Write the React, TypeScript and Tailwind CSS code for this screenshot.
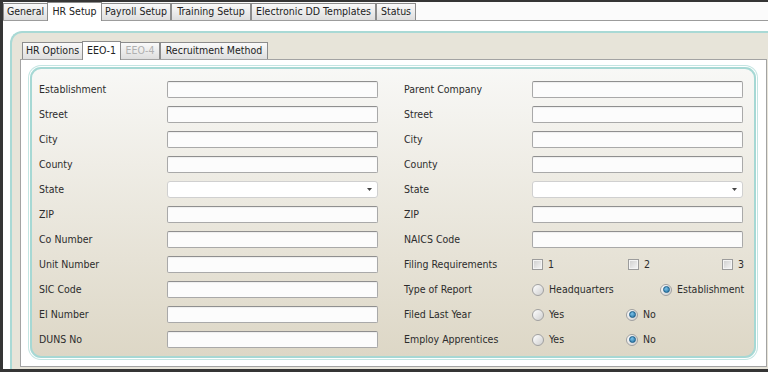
import { ReactNode } from "react";

const topTabs = [
  { label: "General", w: "w-[45px]" },
  { label: "HR Setup", w: "w-[55px]", active: true },
  { label: "Payroll Setup", w: "w-[70px]" },
  { label: "Training Setup", w: "w-[80px]" },
  { label: "Electronic DD Templates", w: "w-[125px]" },
  { label: "Status", w: "w-[40px]" },
];

const subTabs = [
  { label: "HR Options", w: "w-[61px]" },
  { label: "EEO-1", w: "w-[39px]", active: true },
  { label: "EEO-4", w: "w-[40px]", disabled: true },
  { label: "Recruitment Method", w: "w-[108px]" },
];

const TabButton = ({
  label,
  w,
  active,
  disabled,
}: {
  label: string;
  w: string;
  active?: boolean;
  disabled?: boolean;
}) => (
  <div
    className={
      active
        ? `${w} h-[19px] -mb-px -mx-px z-10 flex items-center justify-center bg-white border border-b-0 border-[#8c8c8c] text-[#222]`
        : `${w} h-[17px] flex items-center justify-center bg-gradient-to-b from-[#fafafa] to-[#dedede] border border-b-0 border-[#8c8c8c] ${
            disabled ? "text-[#b0b0b0]" : "text-[#222]"
          }`
    }
  >
    {label}
  </div>
);

const TextBox = () => (
  <div className="w-[211px] h-[17px] bg-[#fcfcfc] border border-[#a9a9a9] border-t-[#8f8f8f] rounded-[2px] shadow-[inset_0_1px_1px_rgba(0,0,0,0.06)]" />
);

const SelectBox = () => (
  <div className="w-[211px] h-[17px] bg-white border border-[#d0d0d0] rounded-[3px] flex items-center justify-end pr-[5px]">
    <svg width="5" height="3" viewBox="0 0 5 3">
      <path d="M0 0 H5 L2.5 3 Z" fill="#444" />
    </svg>
  </div>
);

const CheckBox = ({ label }: { label: string }) => (
  <div className="flex items-center gap-[5px]">
    <div className="w-[11px] h-[11px] border border-[#9c9c9c] bg-[#f4f4f4] flex items-center justify-center">
      <div className="w-[7px] h-[7px] bg-gradient-to-br from-[#d2d2d2] to-[#f2f2f2]" />
    </div>
    <span>{label}</span>
  </div>
);

const Radio = ({ label, checked }: { label: string; checked?: boolean }) => (
  <div className="flex items-center gap-[5px]">
    <div className="w-[12px] h-[12px] rounded-full border border-[#a0a0a0] bg-gradient-to-br from-[#ffffff] to-[#cfcfcf] flex items-center justify-center">
      {checked && (
        <div className="w-[7px] h-[7px] rounded-full bg-[radial-gradient(circle_at_40%_35%,#7cc3ea,#1f6c9c)] border border-[#1b5f8a]" />
      )}
    </div>
    <span>{label}</span>
  </div>
);

const Row = ({
  left,
  leftInput,
  right,
  rightInput,
}: {
  left: string;
  leftInput: ReactNode;
  right: string;
  rightInput: ReactNode;
}) => (
  <div className="h-[25px] flex items-center">
    <div className="w-[128px]">{left}</div>
    {leftInput}
    <div className="w-[26px]" />
    <div className="w-[128px]">{right}</div>
    {rightInput}
  </div>
);

export default function App() {
  return (
    <div className="w-[768px] h-[372px] overflow-hidden bg-white border-l-[3px] border-t-2 border-b-[3px] border-[#353535] flex flex-col text-[10.5px] text-[#2c2c2c] font-['DejaVu_Sans_Condensed','DejaVu_Sans',sans-serif]">
      {/* main tabs */}
      <div className="h-[19px] shrink-0 flex items-end bg-[#fbfbfb] border-b border-[#9c9c9c]">
        {topTabs.map((t) => (
          <TabButton key={t.label} {...t} />
        ))}
      </div>

      <div className="flex-1 min-h-0 flex pl-[7px] pt-[10px]">
        <div className="flex-1 flex flex-col border-t-2 border-l-2 border-[#a9d9d5] rounded-tl-[12px] bg-[#e7e4d9] pt-[8px] pl-[8px] pr-[4px] pb-[2px]">
          {/* sub tabs */}
          <div className="h-[18px] shrink-0 flex items-end pl-[2px]">
            {subTabs.map((t) => (
              <TabButton key={t.label} {...t} />
            ))}
          </div>

          <div className="flex-1 bg-white border border-[#a3a3a3] pt-[7px] pl-[9px] pr-[10px]">
            <div className="h-[291px] border-2 border-[#a6d8d4] rounded-[11px] shadow-[0_0_0_1px_#ffffff,0_0_0_2px_#c4e5e2] bg-gradient-to-b from-[#f8f8f6] to-[#ddd7c6] pt-[8px] pl-[7px] pr-[7px]">
              <Row left="Establishment" leftInput={<TextBox />} right="Parent Company" rightInput={<TextBox />} />
              <Row left="Street" leftInput={<TextBox />} right="Street" rightInput={<TextBox />} />
              <Row left="City" leftInput={<TextBox />} right="City" rightInput={<TextBox />} />
              <Row left="County" leftInput={<TextBox />} right="County" rightInput={<TextBox />} />
              <Row left="State" leftInput={<SelectBox />} right="State" rightInput={<SelectBox />} />
              <Row left="ZIP" leftInput={<TextBox />} right="ZIP" rightInput={<TextBox />} />
              <Row left="Co Number" leftInput={<TextBox />} right="NAICS Code" rightInput={<TextBox />} />
              <Row
                left="Unit Number"
                leftInput={<TextBox />}
                right="Filing Requirements"
                rightInput={
                  <div className="w-[215px] grid grid-cols-[96px_94px_auto]">
                    <CheckBox label="1" />
                    <CheckBox label="2" />
                    <CheckBox label="3" />
                  </div>
                }
              />
              <Row
                left="SIC Code"
                leftInput={<TextBox />}
                right="Type of Report"
                rightInput={
                  <div className="w-[215px] grid grid-cols-[128px_auto]">
                    <Radio label="Headquarters" />
                    <Radio label="Establishment" checked />
                  </div>
                }
              />
              <Row
                left="EI Number"
                leftInput={<TextBox />}
                right="Filed Last Year"
                rightInput={
                  <div className="w-[211px] grid grid-cols-[94px_auto]">
                    <Radio label="Yes" />
                    <Radio label="No" checked />
                  </div>
                }
              />
              <Row
                left="DUNS No"
                leftInput={<TextBox />}
                right="Employ Apprentices"
                rightInput={
                  <div className="w-[211px] grid grid-cols-[94px_auto]">
                    <Radio label="Yes" />
                    <Radio label="No" checked />
                  </div>
                }
              />
            </div>
          </div>
        </div>
      </div>
    </div>
  );
}
